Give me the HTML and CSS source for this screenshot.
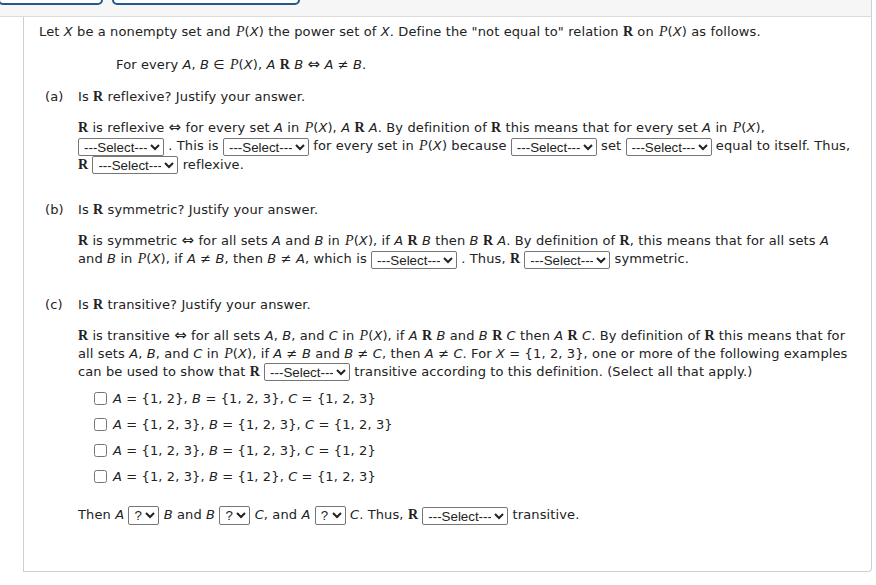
FILE: index.html
```html
<!DOCTYPE html>
<html>
<head>
<meta charset="utf-8">
<link rel="stylesheet" href="styles.css">
</head>
<body>
<div class="topbar">
  <div class="tab tab1"></div>
  <div class="tab tab2"></div>
</div>
<div class="wrap">
  <div class="card">
    <p class="intro">Let <i>X</i> be a nonempty set and <span class="scr">P</span>(<i>X</i>) the power set of <i>X</i>. Define the "not equal to" relation <b class="R">R</b> on <span class="scr">P</span>(<i>X</i>) as follows.</p>
    <p class="def">For every <i>A</i>, <i>B</i> ∈ <span class="scr">P</span>(<i>X</i>), <i>A</i> <b class="R">R</b> <i>B</i> <span class="iff">⇔</span> <i>A</i> ≠ <i>B</i>.</p>

    <div class="part">
      <div class="lbl">(a)</div>
      <div class="body">
        <p class="q">Is <b class="R">R</b> reflexive? Justify your answer.</p>
        <p class="ans"><b class="R">R</b> is reflexive <span class="iff">⇔</span> for every set <i>A</i> in <span class="scr">P</span>(<i>X</i>), <i>A</i> <b class="R">R</b> <i>A</i>. By definition of <b class="R">R</b> this means that for every set <i>A</i> in <span class="scr">P</span>(<i>X</i>),<br><select class="sel"><option>---Select---</option></select> . This is <select class="sel"><option>---Select---</option></select> for every set in <span class="scr">P</span>(<i>X</i>) because <select class="sel"><option>---Select---</option></select> set <select class="sel"><option>---Select---</option></select> equal to itself. Thus,<br><b class="R">R</b> <select class="sel"><option>---Select---</option></select> reflexive.</p>
      </div>
    </div>

    <div class="part">
      <div class="lbl">(b)</div>
      <div class="body">
        <p class="q">Is <b class="R">R</b> symmetric? Justify your answer.</p>
        <p class="ans"><b class="R">R</b> is symmetric <span class="iff">⇔</span> for all sets <i>A</i> and <i>B</i> in <span class="scr">P</span>(<i>X</i>), if <i>A</i> <b class="R">R</b> <i>B</i> then <i>B</i> <b class="R">R</b> <i>A</i>. By definition of <b class="R">R</b>, this means that for all sets <i>A</i><br>and <i>B</i> in <span class="scr">P</span>(<i>X</i>), if <i>A</i> ≠ <i>B</i>, then <i>B</i> ≠ <i>A</i>, which is <select class="sel"><option>---Select---</option></select> . Thus, <b class="R">R</b> <select class="sel"><option>---Select---</option></select> symmetric.</p>
      </div>
    </div>

    <div class="part">
      <div class="lbl">(c)</div>
      <div class="body">
        <p class="q">Is <b class="R">R</b> transitive? Justify your answer.</p>
        <p class="ans"><b class="R">R</b> is transitive <span class="iff">⇔</span> for all sets <i>A</i>, <i>B</i>, and <i>C</i> in <span class="scr">P</span>(<i>X</i>), if <i>A</i> <b class="R">R</b> <i>B</i> and <i>B</i> <b class="R">R</b> <i>C</i> then <i>A</i> <b class="R">R</b> <i>C</i>. By definition of <b class="R">R</b> this means that for<br>all sets <i>A</i>, <i>B</i>, and <i>C</i> in <span class="scr">P</span>(<i>X</i>), if <i>A</i> ≠ <i>B</i> and <i>B</i> ≠ <i>C</i>, then <i>A</i> ≠ <i>C</i>. For <i>X</i> = {1, 2, 3}, one or more of the following examples<br>can be used to show that <b class="R">R</b> <select class="sel"><option>---Select---</option></select> transitive according to this definition. (Select all that apply.)</p>
        <ul class="opts">
          <li><input type="checkbox"><span><i>A</i> = {1, 2}, <i>B</i> = {1, 2, 3}, <i>C</i> = {1, 2, 3}</span></li>
          <li><input type="checkbox"><span><i>A</i> = {1, 2, 3}, <i>B</i> = {1, 2, 3}, <i>C</i> = {1, 2, 3}</span></li>
          <li><input type="checkbox"><span><i>A</i> = {1, 2, 3}, <i>B</i> = {1, 2, 3}, <i>C</i> = {1, 2}</span></li>
          <li><input type="checkbox"><span><i>A</i> = {1, 2, 3}, <i>B</i> = {1, 2}, <i>C</i> = {1, 2, 3}</span></li>
        </ul>
        <p class="then">Then <i>A</i> <select class="sel q-sel"><option>?</option></select> <i>B</i> and <i>B</i> <select class="sel q-sel"><option>?</option></select> <i>C</i>, and <i>A</i> <select class="sel q-sel"><option>?</option></select> <i>C</i>. Thus, <b class="R">R</b> <select class="sel"><option>---Select---</option></select> transitive.</p>
      </div>
    </div>
  </div>
</div>
</body>
</html>
```

FILE: styles.css
```css
html, body {
  margin: 0;
  padding: 0;
  background: #fff;
}
body {
  font-family: "DejaVu Sans", Verdana, sans-serif;
  font-size: 13px;
  letter-spacing: 0.12px;
  color: #222;
  width: 876px;
  height: 585px;
  overflow: hidden;
}
.topbar {
  height: 16px;
  background: #f6f6f6;
  border-bottom: 1px solid #dcdcdc;
  display: flex;
  gap: 9px;
  overflow: hidden;
  width: 871px;
  border-right: 1px solid #d0d0d0;
}
.tab {
  height: 26px;
  margin-top: -21px;
  border: 2px solid #24588a;
  border-radius: 5px;
  background: #fff;
  box-sizing: border-box;
}
.tab1 { width: 105px; margin-left: -2px; }
.tab2 { width: 188px; }
.wrap {
  padding-left: 23px;
}
.card {
  width: 849px;
  height: 555px;
  box-sizing: border-box;
  border-left: 1px solid #cfcfcf;
  border-right: 1px solid #cfcfcf;
  border-bottom: 1px solid #cfcfcf;
  border-bottom-right-radius: 4px;
  padding: 6px 10px 0 15px;
}
p {
  margin: 0;
  line-height: 18px;
  white-space: nowrap;
}
i {
  font-style: italic;
}
.R {
  font-family: "Liberation Serif", "Times New Roman", serif;
  font-weight: bold;
  font-size: 14px;
  letter-spacing: 0;
}
.scr {
  font-family: "Liberation Serif", "Times New Roman", serif;
  font-style: italic;
  font-size: 14px;
  letter-spacing: 0;
  padding-left: 1px;
}
.iff {
  font-family: "DejaVu Sans", sans-serif;
  font-size: 15px;
  line-height: 1;
  letter-spacing: 0;
}
.def {
  margin-top: 15px;
  padding-left: 77px;
}
.part {
  display: flex;
  margin-top: 14px;
  padding-left: 6px;
}
.part + .part {
  margin-top: 27px;
}
.lbl {
  width: 33px;
  line-height: 18px;
}
.q {
  margin-bottom: 13px;
}
.sel {
  font-family: "Liberation Sans", Arial, sans-serif;
  font-size: 13.33px;
  letter-spacing: 0;
  height: 18px;
  line-height: 16px;
  width: 86px;
  padding: 0 0 0 1px;
  margin: 0;
  border: 1px solid #767676;
  border-radius: 2px;
  background: #fff;
  color: #222;
  vertical-align: middle;
  box-sizing: border-box;
}
.q-sel {
  width: 31px;
  height: 19px;
}
.opts {
  list-style: none;
  margin: 8px 0 0 0;
  padding: 0 0 0 16px;
}
.opts li {
  display: flex;
  align-items: center;
  height: 18px;
  margin-bottom: 8px;
}
.opts input {
  width: 13px;
  height: 13px;
  margin: 0 6px 0 0;
}
.then {
  margin-top: 21px;
}
```
